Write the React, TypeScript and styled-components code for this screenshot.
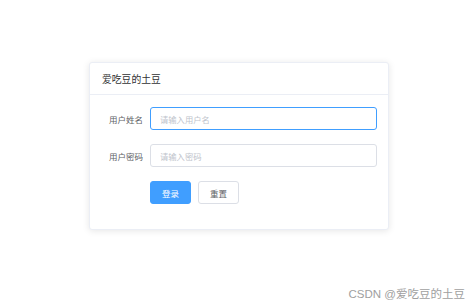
import styled, { createGlobalStyle } from "styled-components";

const Global = createGlobalStyle`
  html, body { margin: 0; padding: 0; background: #fff; }
  body {
    font-family: "Noto Sans CJK SC", "Liberation Sans", sans-serif;
    width: 474px;
    height: 307px;
    overflow: hidden;
  }
`;

const Page = styled.div`
  position: relative;
  width: 474px;
  height: 307px;
  display: flex;
  flex-direction: column;
  align-items: flex-start;
  padding: 62px 0 0 89px;
  box-sizing: border-box;
`;

const Card = styled.div`
  width: 300px;
  height: 168px;
  box-sizing: border-box;
  border: 1px solid #ebeef5;
  border-radius: 3px;
  background: #fff;
  box-shadow: 0 1px 7px rgba(0, 0, 0, 0.1);
`;

const CardHeader = styled.div`
  height: 32px;
  box-sizing: border-box;
  border-bottom: 1px solid #ebeef5;
  padding: 0 12px;
  display: flex;
  align-items: center;
  font-size: 9.8px;
  color: #303133;
`;

const CardBody = styled.div`
  padding: 12px 11px 0 0;
  display: flex;
  flex-direction: column;
  gap: 14px;
`;

const Row = styled.div`
  display: flex;
  align-items: center;
`;

const Label = styled.label`
  width: 53px;
  padding-right: 7px;
  text-align: right;
  font-size: 8.5px;
  color: #606266;
  flex-shrink: 0;
`;

const Input = styled.input<{ $focus?: boolean }>`
  flex: 1;
  height: 23px;
  box-sizing: border-box;
  border: 1px solid ${(p) => (p.$focus ? "#409eff" : "#dcdfe6")};
  border-radius: 3px;
  padding: 0 9px;
  font-family: inherit;
  font-size: 8.3px;
  color: #606266;
  outline: none;
  &::placeholder { color: #c0c4cc; }
`;

const Buttons = styled.div`
  display: flex;
  gap: 7px;
  padding-left: 60px;
`;

const Button = styled.button<{ $primary?: boolean }>`
  width: 41px;
  height: 23px;
  border-radius: 3px;
  border: 1px solid ${(p) => (p.$primary ? "#409eff" : "#dcdfe6")};
  background: ${(p) => (p.$primary ? "#409eff" : "#fff")};
  color: ${(p) => (p.$primary ? "#fff" : "#606266")};
  font-family: inherit;
  font-size: 8.5px;
  padding: 0;
  cursor: pointer;
`;

const Watermark = styled.div`
  position: absolute;
  right: 9px;
  bottom: 6px;
  font-size: 11.5px;
  color: #a0a0a0;
  font-family: "Liberation Sans", "Noto Sans CJK SC", sans-serif;
`;

export default function App() {
  return (
    <Page>
      <Global />
      <Card>
        <CardHeader>爱吃豆的土豆</CardHeader>
        <CardBody>
          <Row>
            <Label>用户姓名</Label>
            <Input $focus placeholder="请输入用户名" />
          </Row>
          <Row>
            <Label>用户密码</Label>
            <Input type="password" placeholder="请输入密码" />
          </Row>
          <Buttons>
            <Button $primary>登录</Button>
            <Button>重置</Button>
          </Buttons>
        </CardBody>
      </Card>
      <Watermark>CSDN @爱吃豆的土豆</Watermark>
    </Page>
  );
}
